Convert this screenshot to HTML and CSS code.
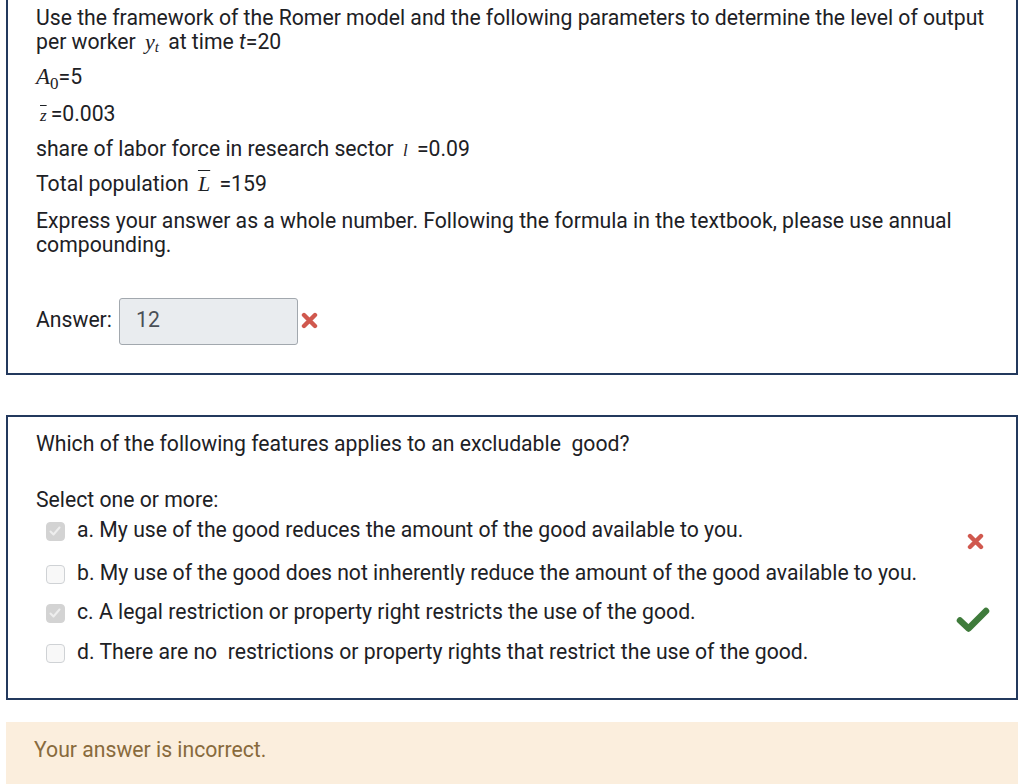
FILE: index.html
```html
<!DOCTYPE html>
<html>
<head>
<meta charset="utf-8">
<link rel="stylesheet" href="styles.css">
</head>
<body>
<div class="page">
  <div class="que que-cut">
    <p class="para m11">Use the framework of the Romer model and the following parameters to determine the level of output per worker <span class="math">y<sub class="sub-i">t</sub></span> at time <i>t</i>=20</p>
    <p class="para m13"><span class="math big">A<sub class="sub-r">0</sub></span>=5</p>
    <p class="para m11"><span class="math small ovl">z</span>=0.003</p>
    <p class="para m11">share of labor force in research sector <span class="math small">l</span> =0.09</p>
    <p class="para m13">Total population <span class="math ovl">L</span> =159</p>
    <p class="para">Express your answer as a whole number. Following the formula in the textbook, please use annual compounding.</p>
    <div class="ablock">
      <span class="alabel">Answer:</span>
      <div class="ainput">12</div>
      <svg class="xicon" width="17" height="17" viewBox="0 0 17 17"><path d="M3 3L14 14M14 3L3 14" stroke="#d0584e" stroke-width="4.4" stroke-linecap="round"/></svg>
    </div>
  </div>

  <div class="que">
    <p class="qtext">Which of the following features applies to an excludable&nbsp; good?</p>
    <p class="prompt">Select one or more:</p>
    <div class="opts">
      <div class="opt opt-a">
        <span class="cb checked"><svg width="18" height="18" viewBox="0 0 18 18"><path d="M4.5 9.5L7.5 12.5L13.5 5.5" fill="none" stroke="#eeeeee" stroke-width="2" stroke-linecap="round" stroke-linejoin="round"/></svg></span>
        <span class="otext">a. My use of the good reduces the amount of the good available to you.</span>
        <svg class="fb fb-x" width="17" height="17" viewBox="0 0 17 17"><path d="M3 3L14 14M14 3L3 14" stroke="#d0584e" stroke-width="4.4" stroke-linecap="round"/></svg>
      </div>
      <div class="opt opt-b">
        <span class="cb"></span>
        <span class="otext">b. My use of the good does not inherently reduce the amount of the good available to you.</span>
      </div>
      <div class="opt opt-c">
        <span class="cb checked"><svg width="18" height="18" viewBox="0 0 18 18"><path d="M4.5 9.5L7.5 12.5L13.5 5.5" fill="none" stroke="#eeeeee" stroke-width="2" stroke-linecap="round" stroke-linejoin="round"/></svg></span>
        <span class="otext">c. A legal restriction or property right restricts the use of the good.</span>
        <svg class="fb fb-ok" width="34" height="27" viewBox="0 0 34 27"><path d="M4 14.5L12.5 22.5L30 5" fill="none" stroke="#3f7b3b" stroke-width="6.5" stroke-linecap="round" stroke-linejoin="round"/></svg>
      </div>
      <div class="opt opt-d">
        <span class="cb"></span>
        <span class="otext">d. There are no&nbsp; restrictions or property rights that restrict the use of the good.</span>
      </div>
    </div>
  </div>

  <div class="outcome">Your answer is incorrect.</div>
</div>
</body>
</html>
```

FILE: styles.css
```css
html, body {
  margin: 0;
  padding: 0;
  background: #ffffff;
}
body {
  font-family: Roboto, "Liberation Sans", sans-serif;
  font-size: 21.2px;
  line-height: 24px;
  color: #1d2125;
  overflow: hidden;
}
.page {
  padding: 0 6px;
}
.que {
  border: 2px solid #23395d;
  padding: 15px 26px 18px 28px;
  margin-bottom: 40px;
}
.que-cut {
  border-top: 0;
  padding-top: 6px;
  padding-bottom: 28px;
  margin-bottom: 40px;
}
.para {
  margin: 0;
  line-height: 24px;
}
.m11 { margin-bottom: 11px; }
.m13 { margin-bottom: 13px; }
.math {
  font-family: "Liberation Serif", serif;
  font-style: italic;
  font-size: 22px;
  padding: 0 4px;
  line-height: 0;
}
.math.big {
  font-size: 23px;
  padding: 0;
}
.math.small {
  font-size: 17px;
}
.ovl {
  text-decoration: overline;
  text-decoration-thickness: 1px;
}
.sub-i {
  font-size: 15px;
  vertical-align: -3px;
  line-height: 0;
}
.sub-r {
  font-style: normal;
  font-size: 17px;
  vertical-align: -5px;
  line-height: 0;
}
.ablock {
  display: flex;
  align-items: center;
  margin-top: 41px;
  height: 47px;
}
.alabel {
  width: 83px;
  flex: none;
  margin-bottom: 4px;
}
.ainput {
  width: 179px;
  height: 47px;
  box-sizing: border-box;
  border: 1px solid #a2a8ae;
  border-radius: 3px;
  background: #e9ecef;
  color: #495057;
  padding: 0 0 3px 16px;
  display: flex;
  align-items: center;
  flex: none;
}
.xicon {
  margin-left: 3px;
  margin-top: -3px;
}
.qtext {
  margin: 0 0 32px 0;
}
.prompt {
  margin: 0 0 6px 0;
}
.opts {
  display: flex;
  flex-direction: column;
}
.opt {
  display: flex;
  align-items: flex-start;
}
.opt-a { height: 43px; }
.opt-b { height: 39px; }
.opt-c { height: 40px; }
.opt-d { height: 40px; }
.cb {
  width: 17px;
  height: 17px;
  margin: 4px 12px 0 10px;
  border: 1px solid #cfd2d5;
  border-radius: 4px;
  background: #f8f8f8;
  box-sizing: content-box;
  flex: none;
  position: relative;
}
.cb.checked {
  background: #d3d3d3;
  border-color: #d3d3d3;
}
.cb svg {
  position: absolute;
  left: -1px;
  top: -1px;
}
.otext {
  flex: 1;
}
.fb {
  flex: none;
}
.fb-x {
  margin: 15px 6px 0 0;
}
.fb-ok {
  margin: 6px 0 0 0;
}
.outcome {
  background: #fbeedd;
  color: #886a3c;
  padding: 16px 28px 40px 28px;
  margin-top: -18px;
}
```
